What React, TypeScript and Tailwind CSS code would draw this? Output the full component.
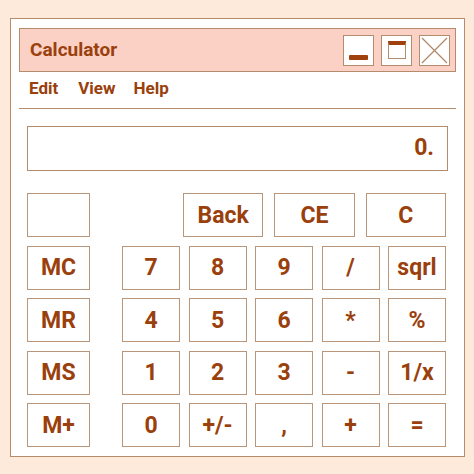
import React from "react";

// calculator window, classic layout

const memKeys = ["MC", "MR", "MS", "M+"];
const padKeys = [
  ["7", "8", "9", "/", "sqrl"],
  ["4", "5", "6", "*", "%"],
  ["1", "2", "3", "-", "1/x"],
  ["0", "+/-", ",", "+", "="],
];

function Key(props: { label?: string; className?: string }) {
  return (
    <button
      type="button"
      className={
        "h-[44px] border border-[#b99579] bg-white text-[23px] font-bold text-[#9a400c] flex items-center justify-center leading-none " +
        (props.className || "")
      }
    >
      {props.label}
    </button>
  );
}

export default function App() {
  return (
    <div
      className="w-[474px] h-[474px] bg-[#fdeadb] pt-[18px] pl-[10px]"
      style={{ fontFamily: "Roboto, 'Liberation Sans', sans-serif" }}
    >
      <div className="w-[455px] h-[439px] border border-[#b38b6d] bg-white px-[8px] pt-[9px]">
        {/* title bar */}
        <div className="h-[44px] bg-[#fbd1c5] border border-[#b38b6d] flex items-center justify-between pl-[10px] pr-[5px]">
          <span className="text-[19px] font-bold text-[#9a400c]">Calculator</span>
          <div className="flex gap-[7px]">
            <div className="w-[31px] h-[31px] bg-white border border-[#b38b6d] flex items-end justify-center pb-[5px]">
              <div className="w-[19px] h-[5px] bg-[#a0400c] rounded-[1px]" />
            </div>
            <div className="w-[31px] h-[31px] bg-white border border-[#b38b6d] flex items-center justify-center">
              <div className="w-[18px] h-[18px] border border-[#b38b6d] border-t-[4px] border-t-[#a0400c]" />
            </div>
            <div className="w-[31px] h-[31px] bg-white border border-[#b38b6d] flex items-center justify-center">
              <svg width="27" height="27" viewBox="0 0 27 27">
                <path d="M1 1 L26 26 M26 1 L1 26" stroke="#b08766" strokeWidth="1.2" />
              </svg>
            </div>
          </div>
        </div>

        {/* menu */}
        <div className="h-[37px] flex items-center pl-[10px] pb-[3px] border-b border-[#b38b6d] text-[17px] font-bold text-[#9a400c]">
          <span>Edit</span>
          <span className="ml-[20px]">View</span>
          <span className="ml-[18px]">Help</span>
        </div>

        <div className="px-[8px] pt-[17px]">
          {/* display */}
          <div className="h-[45px] border border-[#b38b6d] flex items-center justify-end pr-[13px] text-[23px] font-bold text-[#9a400c]">
            0.
          </div>

          <div className="mt-[22px] flex flex-col gap-[8.5px]">
            <div className="flex">
              <Key className="w-[63px]" />
              <div className="ml-[93px] grid grid-cols-3 gap-[11px] w-[263px]">
                <Key label="Back" />
                <Key label="CE" />
                <Key label="C" />
              </div>
            </div>
            {padKeys.map((row, i) => (
              <div key={i} className="flex">
                <Key label={memKeys[i]} className="w-[63px]" />
                <div className="ml-[32px] grid grid-cols-5 gap-[8.5px] w-[324px]">
                  {row.map((k) => (
                    <Key key={k} label={k} />
                  ))}
                </div>
              </div>
            ))}
          </div>
        </div>
      </div>
    </div>
  );
}
